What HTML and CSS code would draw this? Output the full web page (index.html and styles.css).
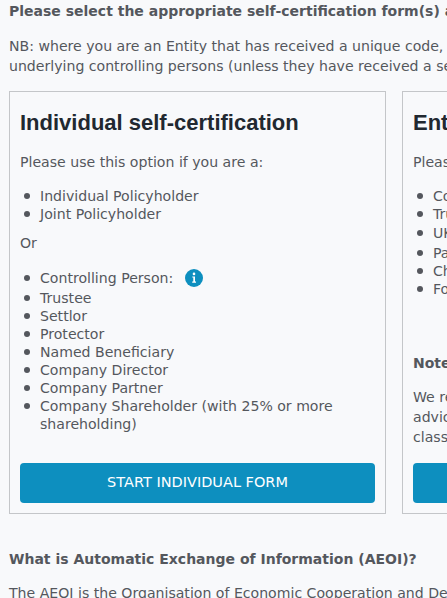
FILE: index.html
```html
<!DOCTYPE html>
<html lang="en">
<head>
    <meta charset="UTF-8">
    <meta name="viewport" content="width=device-width, initial-scale=1.0">
    <title>Self-certification</title>
    <link rel="stylesheet" href="styles.css">
</head>
<body>
    <div class="page">
        <p class="lead">Please select the appropriate self-certification form(s) and complete them online.</p>
        <p class="intro">NB: where you are an Entity that has received a unique code, you must also provide details of any<br>underlying controlling persons (unless they have received a separate code).</p>

        <div class="cards">
            <div class="card">
                <h2>Individual self-certification</h2>
                <p>Please use this option if you are a:</p>
                <ul class="first-list">
                    <li>Individual Policyholder</li>
                    <li>Joint Policyholder</li>
                </ul>
                <p>Or</p>
                <ul>
                    <li class="with-info">Controlling Person:
                        <svg class="info" viewBox="0 0 18 18" width="18" height="18">
                            <circle cx="9" cy="9" r="9" fill="#0d8fbf"/>
                            <circle cx="9" cy="4.9" r="1.3" fill="#fff"/>
                            <path d="M7.3 7.4h2.7v5.2h1v1.2H7.2v-1.2h1.1V8.6h-1z" fill="#fff"/>
                        </svg>
                    </li>
                    <li>Trustee</li>
                    <li>Settlor</li>
                    <li>Protector</li>
                    <li>Named Beneficiary</li>
                    <li>Company Director</li>
                    <li>Company Partner</li>
                    <li>Company Shareholder (with 25% or more shareholding)</li>
                </ul>
                <a class="btn" href="#">START INDIVIDUAL FORM</a>
            </div>

            <div class="card">
                <h2>Entity self-certification</h2>
                <p>Please use this option if you are a:</p>
                <ul>
                    <li>Company</li>
                    <li>Trust</li>
                    <li class="with-info">UK Pension Scheme</li>
                    <li>Partnership</li>
                    <li>Charity</li>
                    <li>Foundation</li>
                </ul>
                <h3>Note</h3>
                <p class="note">We recommend that you seek tax<br>advice if you are unsure of your<br>classification.</p>
                <a class="btn" href="#">START ENTITY FORM</a>
            </div>
        </div>

        <h4>What is Automatic Exchange of Information (AEOI)?</h4>
        <p class="intro outro">The AEOI is the Organisation of Economic Cooperation and Development's standard for sharing data.</p>
    </div>
</body>
</html>
```

FILE: styles.css
```css
html, body {
    margin: 0;
    padding: 0;
    height: 598px;
    overflow: hidden;
    background: #f8f9fb;
}

.page {
    padding: 1px 0 0 9px;
    width: 900px;
    font-family: "DejaVu Sans", Verdana, sans-serif;
    font-size: 14.1px;
    line-height: 20px;
    color: #54575d;
}

p {
    margin: 0;
}

.lead {
    font-size: 14px;
    font-weight: bold;
    white-space: nowrap;
}

.intro {
    margin-top: 15px;
    white-space: nowrap;
}

.outro {
    margin-top: 14px;
}

.cards {
    display: flex;
    gap: 16px;
    margin-top: 15px;
}

.card {
    box-sizing: border-box;
    display: flex;
    flex-direction: column;
    width: 377px;
    height: 423px;
    padding: 16px 10px 10px;
    border: 1px solid #c4c6c9;
}

.card h2 {
    margin: 0 0 15px;
    font-family: "Liberation Sans", Arial, sans-serif;
    font-size: 22px;
    line-height: 29px;
    font-weight: bold;
    color: #212830;
}

.card ul {
    margin: 15px 0;
    padding: 0 0 0 20px;
    list-style: none;
    line-height: 18px;
}

.card ul.first-list {
    margin-bottom: 10px;
}

.card li {
    position: relative;
}

.card li::before {
    content: "";
    position: absolute;
    left: -16px;
    top: 6px;
    width: 6px;
    height: 6px;
    border-radius: 50%;
    background: #54575d;
}

.card li.with-info {
    line-height: 21px;
}

.card li.with-info::before {
    top: 7px;
}

.info {
    vertical-align: -4px;
    margin-left: 7px;
}

.card h3 {
    margin: 40px 0 14px;
    font-size: 14px;
    line-height: 20px;
    font-weight: bold;
}

.btn {
    display: block;
    flex-shrink: 0;
    margin-top: auto;
    height: 40px;
    line-height: 38px;
    font-size: 14.5px;
    background: #0d8fbf;
    border-radius: 4px;
    color: #fff;
    text-align: center;
    text-decoration: none;
}

h4 {
    margin: 35px 0 0;
    font-size: 14px;
    line-height: 20px;
    font-weight: bold;
}
```
